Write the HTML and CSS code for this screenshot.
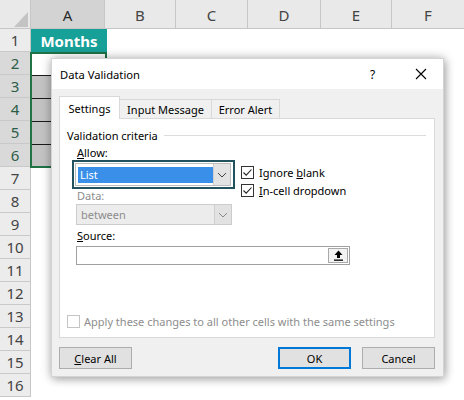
FILE: index.html
```html
<!DOCTYPE html>
<html>
<head>
<meta charset="utf-8">
<link rel="stylesheet" href="styles.css">
</head>
<body>
<div class="sheet">
  <div class="hdr">
    <div class="corner"><svg width="31" height="29" viewBox="0 0 31 29"><polygon points="28,12 28,27 14,27" fill="#c4c4c4"/></svg></div>
    <div class="ch ch-a sel">A</div>
    <div class="ch ch-b">B</div>
    <div class="ch ch-c">C</div>
    <div class="ch ch-d">D</div>
    <div class="ch ch-e">E</div>
    <div class="ch ch-f">F</div>
  </div>
  <div class="grid">
    <div class="rowhdrs">
      <div class="rh">1</div>
      <div class="rh sel">2</div>
      <div class="rh sel">3</div>
      <div class="rh sel">4</div>
      <div class="rh sel">5</div>
      <div class="rh sel">6</div>
      <div class="rh">7</div>
      <div class="rh">8</div>
      <div class="rh">9</div>
      <div class="rh">10</div>
      <div class="rh">11</div>
      <div class="rh">12</div>
      <div class="rh">13</div>
      <div class="rh">14</div>
      <div class="rh">15</div>
      <div class="rh">16</div>
    </div>
    <div class="col-a">
      <div class="months">Months</div>
      <div class="selection">
        <div class="cell active"></div>
        <div class="cell hl"></div>
        <div class="cell hl"></div>
        <div class="cell hl"></div>
        <div class="cell hl last"></div>
      </div>
    </div>
  </div>
</div>

<div class="dialog">
  <div class="titlebar">
    <span class="title">Data Validation</span>
    <span class="help">?</span>
    <svg class="close" width="12" height="12" viewBox="0 0 12 12"><path d="M1 1 L11 11 M11 1 L1 11" stroke="#000" stroke-width="1.1" fill="none"/></svg>
  </div>
  <div class="dbody">
    <div class="tabs">
      <div class="tab active">Settings</div>
      <div class="tab">Input Message</div>
      <div class="tab">Error Alert</div>
    </div>
    <div class="panel">
      <div class="legend"><span>Validation criteria</span><span class="rule"></span></div>
      <div class="criteria">
        <div class="label"><u>A</u>llow:</div>
        <div class="allow-row">
          <div class="combo-focus">
            <div class="combo-inner">
              <div class="hlval">List</div>
              <div class="ddbtn"><svg width="10" height="6" viewBox="0 0 10 6"><polyline points="1,1 5,5 9,1" fill="none" stroke="#444" stroke-width="1"/></svg></div>
            </div>
          </div>
          <div class="checks">
            <div class="chk"><span class="box"><svg width="11" height="11" viewBox="0 0 11 11"><polyline points="1.5,5.5 4.2,8.2 9.5,2.5" fill="none" stroke="#222" stroke-width="1.1"/></svg></span><span>Ignore <u>b</u>lank</span></div>
            <div class="chk"><span class="box"><svg width="11" height="11" viewBox="0 0 11 11"><polyline points="1.5,5.5 4.2,8.2 9.5,2.5" fill="none" stroke="#222" stroke-width="1.1"/></svg></span><span><u>I</u>n-cell dropdown</span></div>
          </div>
        </div>
        <div class="label dim">Data:</div>
        <div class="combo-dis">
          <div class="disval">between</div>
          <div class="ddbtn dis"><svg width="10" height="6" viewBox="0 0 10 6"><polyline points="1,1 5,5 9,1" fill="none" stroke="#888" stroke-width="1"/></svg></div>
        </div>
        <div class="label src"><u>S</u>ource:</div>
        <div class="source">
          <div class="srcbtn"><svg width="11" height="11" viewBox="0 0 11 11"><path d="M5.5 0.5 L9.5 5 L7 5 L7 8 L4 8 L4 5 L1.5 5 Z" fill="#000"/><rect x="1" y="9.5" width="9" height="1.3" fill="#000"/></svg></div>
        </div>
      </div>
      <div class="apply"><span class="box dis"></span><span>Apply these changes to all other cells with the same settings</span></div>
    </div>
    <div class="buttons">
      <div class="btn"><u>C</u>lear All</div>
      <div class="spacer"></div>
      <div class="btn ok">OK</div>
      <div class="btn">Cancel</div>
    </div>
  </div>
</div>
</body>
</html>
```

FILE: styles.css
```css
html, body {
  margin: 0;
  padding: 0;
  background: #fff;
  overflow: hidden;
}
body {
  width: 464px;
  height: 400px;
  position: relative;
  font-family: "Noto Sans", "DejaVu Sans", sans-serif;
}
.sheet {
  width: 464px;
}
.hdr {
  display: flex;
  height: 29px;
  background: #e9e9e9;
  border-bottom: 1px solid #c6c6c6;
  box-sizing: border-box;
}
.corner {
  width: 31px;
  height: 28px;
  border-right: 1px solid #c6c6c6;
  box-sizing: border-box;
}
.corner svg { display: block; }
.ch {
  box-sizing: border-box;
  height: 28px;
  border-right: 1px solid #c6c6c6;
  display: flex;
  align-items: center;
  justify-content: center;
  font-size: 15px;
  color: #444;
  padding-top: 1px;
}
.ch.sel {
  background: #d3d3d3;
  color: #2a2a2a;
}
.ch-a { width: 76px; }
.ch-b { width: 73px; }
.ch-c { width: 74px; }
.ch-d { width: 75px; }
.ch-e { width: 73px; }
.ch-f { width: 74px; border-right: none; }

.grid {
  display: flex;
}
.rowhdrs {
  width: 31px;
  display: flex;
  flex-direction: column;
}
.rh {
  box-sizing: border-box;
  height: 23px;
  background: #ececec;
  border-bottom: 1px solid #c9c9c9;
  border-right: 1px solid #c6c6c6;
  display: flex;
  align-items: center;
  justify-content: center;
  font-size: 15px;
  color: #444;
}
.rh.sel {
  background: #d9d9d9;
  color: #2c5e47;
}
.col-a {
  width: 76px;
  display: flex;
  flex-direction: column;
}
.months {
  height: 23px;
  background: #17a098;
  color: #fff;
  font-weight: bold;
  font-size: 15px;
  display: flex;
  align-items: center;
  justify-content: center;
  box-sizing: border-box;
}
.selection {
  border: 2px solid #217346;
  margin-left: -1px;
  width: 77px;
  box-sizing: border-box;
}
.cell {
  height: 23px;
  box-sizing: border-box;
}
.cell.active { height: 21px; }
.cell.hl {
  background: #c3c3c3;
  border-top: 1px solid #1a1a1a;
}
.cell.last { height: 22px; }

/* dialog */
.dialog {
  position: absolute;
  left: 51px;
  top: 58px;
  width: 393px;
  height: 319px;
  background: #f0f0f0;
  border: 1px solid #d4d4d4;
  box-sizing: border-box;
  box-shadow: 0 0 10px rgba(0,0,0,0.28), 2px 3px 8px rgba(0,0,0,0.18);
  font-size: 11px;
  color: #000;
}
.titlebar {
  height: 30px;
  background: #fff;
  display: flex;
  align-items: center;
  padding-left: 8px;
}
.title {
  flex: 1;
  font-size: 11.2px;
}
.help {
  font-size: 12px;
  width: 12px;
  margin-right: 33px;
}
.close {
  margin-right: 16px;
}
.dbody {
  padding: 7px 8px 0 7px;
}
.tabs {
  display: flex;
  align-items: flex-end;
  height: 22px;
  position: relative;
  z-index: 1;
}
.tab {
  box-sizing: border-box;
  height: 19px;
  border: 1px solid #d9d9d9;
  border-bottom: none;
  background: #f0f0f0;
  display: flex;
  align-items: center;
  justify-content: center;
  margin-left: -1px;
}
.tab:nth-child(1) { width: 61px; margin-left: 0; }
.tab:nth-child(2) { width: 93px; }
.tab:nth-child(3) { width: 69px; }
.tab.active {
  background: #fff;
  margin-bottom: -1px;
  height: 23px;
}
.panel {
  box-sizing: border-box;
  height: 220px;
  background: #fff;
  border: 1px solid #d9d9d9;
  padding: 8px 8px 0 7px;
  display: flex;
  flex-direction: column;
}
.legend {
  display: flex;
  align-items: center;
  height: 16px;
  gap: 6px;
}
.legend .rule {
  flex: 1;
  border-top: 1px solid #dcdcdc;
  margin-top: 1px;
}
.criteria {
  padding-left: 5px;
}
.label {
  height: 14px;
  line-height: 14px;
  margin-top: 3px;
  padding-left: 5px;
}
.label.dim {
  color: #8d8d8d;
  margin-top: 0;
}
.label.src {
  margin-top: 4px;
}
.allow-row {
  display: flex;
  align-items: flex-start;
  height: 29px;
}
.combo-focus {
  width: 163px;
  height: 29px;
  box-sizing: border-box;
  border: 2px solid #23525f;
  padding: 1px 2px 1px 1px;
  background: #fff;
}
.combo-inner {
  height: 100%;
  box-sizing: border-box;
  border: 1px solid #bcbcbc;
  display: flex;
  align-items: center;
  padding-left: 2px;
}
.hlval {
  flex: 1;
  height: 16px;
  background: #3a8fe8;
  color: #fff;
  line-height: 16px;
  padding-left: 2px;
}
.ddbtn {
  width: 17px;
  height: 100%;
  background: #e3e3e3;
  border-left: 1px solid #cfcfcf;
  display: flex;
  align-items: center;
  justify-content: center;
  box-sizing: border-box;
}
.checks {
  margin-left: 6px;
  padding-top: 6px;
  display: flex;
  flex-direction: column;
  gap: 5px;
}
.chk {
  display: flex;
  align-items: center;
  gap: 5px;
  height: 13px;
}
.box {
  width: 13px;
  height: 13px;
  box-sizing: border-box;
  border: 1px solid #333;
  background: #fff;
  display: flex;
  align-items: center;
  justify-content: center;
  flex: none;
}
.box.dis {
  border-color: #c4c4c4;
}
.combo-dis {
  margin-top: 1px;
  margin-left: 4px;
  width: 156px;
  height: 21px;
  box-sizing: border-box;
  border: 1px solid #cccccc;
  background: #ececec;
  display: flex;
  align-items: center;
}
.disval {
  flex: 1;
  padding-left: 4px;
  color: #8d8d8d;
}
.ddbtn.dis {
  background: #e2e2e2;
  border-left: 1px solid #cfcfcf;
}
.source {
  margin-top: 3px;
  margin-left: 4px;
  width: 274px;
  height: 19px;
  box-sizing: border-box;
  border: 1px solid #a0a0a0;
  background: #fff;
  display: flex;
  justify-content: flex-end;
  align-items: center;
  padding-right: 1px;
}
.srcbtn {
  width: 20px;
  height: 15px;
  box-sizing: border-box;
  border: 1px solid #a9a9a9;
  background: #f3f3f3;
  display: flex;
  align-items: center;
  justify-content: center;
}
.apply {
  margin-top: auto;
  margin-bottom: 9px;
  display: flex;
  align-items: center;
  gap: 4px;
  height: 14px;
  color: #8d8d8d;
}
.buttons {
  display: flex;
  margin-top: 9px;
  gap: 11px;
}
.spacer { flex: 1; }
.btn {
  width: 73px;
  height: 22px;
  box-sizing: border-box;
  border: 1px solid #adadad;
  background: #e1e1e1;
  display: flex;
  align-items: center;
  justify-content: center;
}
.btn.ok {
  border: 2px solid #0078d7;
}
```
